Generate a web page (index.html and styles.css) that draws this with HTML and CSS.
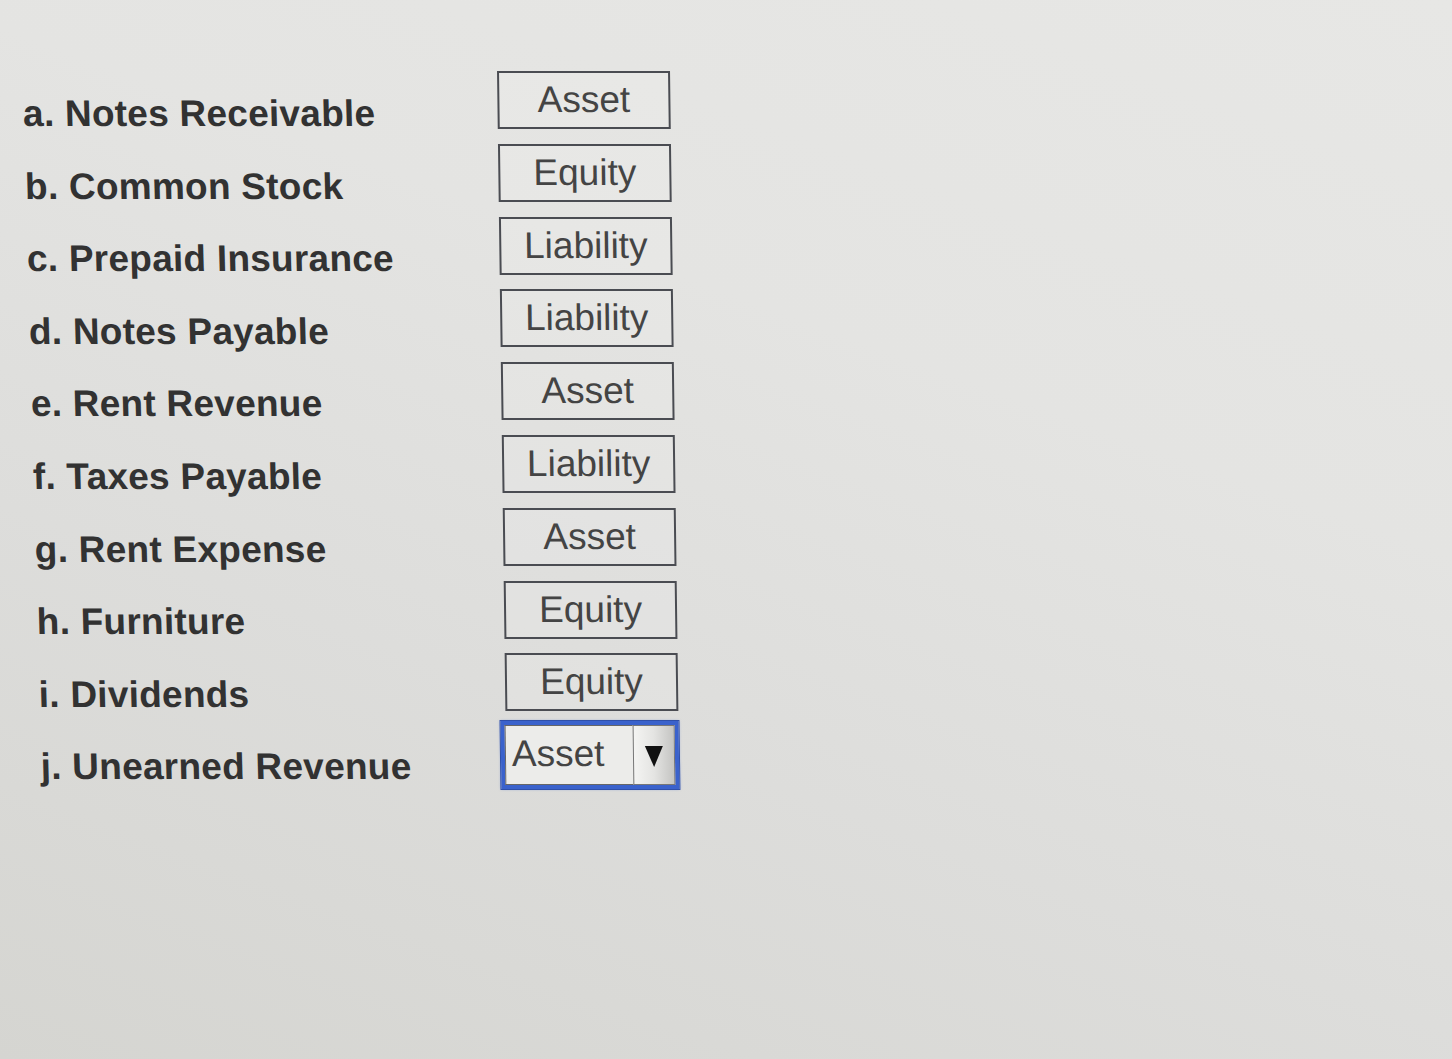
FILE: index.html
```html
<!DOCTYPE html>
<html lang="en">
<head>
<meta charset="utf-8">
<title>Account classification</title>
<link rel="stylesheet" href="styles.css">
</head>
<body>
<main class="sheet">
  <ul class="labels">
    <li>a. Notes Receivable</li>
    <li>b. Common Stock</li>
    <li>c. Prepaid Insurance</li>
    <li>d. Notes Payable</li>
    <li>e. Rent Revenue</li>
    <li>f. Taxes Payable</li>
    <li>g. Rent Expense</li>
    <li>h. Furniture</li>
    <li>i. Dividends</li>
    <li>j. Unearned Revenue</li>
  </ul>
  <ul class="answers">
    <li><span class="box">Asset</span></li>
    <li><span class="box">Equity</span></li>
    <li><span class="box">Liability</span></li>
    <li><span class="box">Liability</span></li>
    <li><span class="box">Asset</span></li>
    <li><span class="box">Liability</span></li>
    <li><span class="box">Asset</span></li>
    <li><span class="box">Equity</span></li>
    <li><span class="box">Equity</span></li>
    <li>
      <div class="select" role="combobox" aria-expanded="false">
        <span class="select-value">Asset</span>
        <span class="select-button"><span class="arrow"></span></span>
      </div>
    </li>
  </ul>
</main>
</body>
</html>
```
FILE: styles.css
```css
html, body {
  margin: 0;
  height: 100%;
}
body {
  background: linear-gradient(20deg, #d5d5d1 0%, #dddddb 35%, #e4e4e2 65%, #e7e7e5 100%);
  font-family: "Liberation Sans", Arial, sans-serif;
  overflow: hidden;
}
.sheet {
  display: flex;
  align-items: flex-start;
}
ul {
  list-style: none;
  margin: 0;
  padding: 0;
}
.labels {
  width: 475px;
  padding: 78px 0 0 22px;
  transform: skewX(1.55deg);
  transform-origin: 0 77px;
}
.labels li {
  height: 72.6px;
  line-height: 72.6px;
  font-size: 37px;
  font-weight: bold;
  letter-spacing: 0.25px;
  color: #323232;
  white-space: nowrap;
}
.answers {
  padding-top: 63.6px;
  transform: skewX(0.75deg);
  transform-origin: 0 70px;
}
.answers li {
  height: 72.8px;
  display: flex;
  align-items: center;
}
.box {
  box-sizing: border-box;
  width: 173px;
  height: 58px;
  line-height: 54px;
  border: 2px solid #4a4c52;
  background: rgba(255, 255, 255, 0.12);
  color: #444;
  font-size: 37px;
  text-align: center;
}
.select {
  box-sizing: border-box;
  width: 178px;
  height: 68px;
  margin-left: -5px;
  display: flex;
  border: 4px solid #3a62cc;
  box-shadow: 0 0 3px rgba(58, 98, 204, 0.6);
  background: #ececea;
  outline: 1px solid #2f4fa8;
}
.select-value {
  flex: 1;
  padding-left: 6px;
  line-height: 56px;
  font-size: 37px;
  color: #444;
  border: 1px solid #666;
  border-right: none;
}
.select-button {
  width: 40px;
  display: flex;
  align-items: center;
  justify-content: center;
  background: linear-gradient(to right, #f4f4f2 0%, #e4e4e2 50%, #c4c4c2 100%);
  border: 1px solid #777;
}
.arrow {
  width: 0;
  height: 0;
  border-left: 9px solid transparent;
  border-right: 9px solid transparent;
  border-top: 21px solid #111;
  margin-top: 2px;
}
```
